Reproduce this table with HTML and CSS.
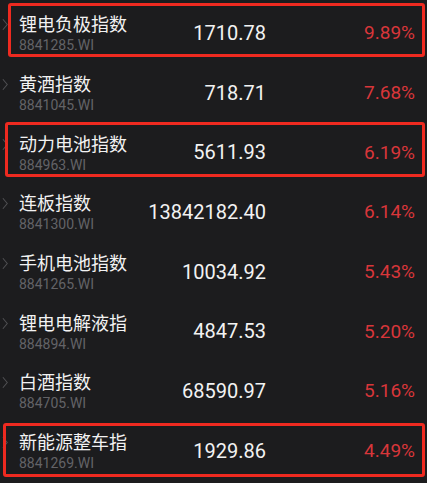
FILE: index.html
```html
<!DOCTYPE html>
<html lang="zh-CN">
  <head>
    <meta charset="UTF-8" />
    <meta name="viewport" content="width=device-width, initial-scale=1.0" />
    <title>指数涨幅</title>
    <link rel="stylesheet" href="styles.css">
  </head>
  <body>
    <ul class="list">
      <li class="row">
        <span class="mark mark-first"></span>
        <svg class="chev" viewBox="0 0 8 14"><polyline points="1,1 6,7 1,13" /></svg>
        <div class="name">
          <div class="title">锂电负极指数</div>
          <div class="code">8841285.WI</div>
        </div>
        <div class="price">1710.78</div>
        <div class="pct">9.89%</div>
      </li>
      <li class="row">
        <svg class="chev" viewBox="0 0 8 14"><polyline points="1,1 6,7 1,13" /></svg>
        <div class="name">
          <div class="title">黄酒指数</div>
          <div class="code">8841045.WI</div>
        </div>
        <div class="price">718.71</div>
        <div class="pct">7.68%</div>
      </li>
      <li class="row">
        <span class="mark mark-mid"></span>
        <svg class="chev" viewBox="0 0 8 14"><polyline points="1,1 6,7 1,13" /></svg>
        <div class="name">
          <div class="title">动力电池指数</div>
          <div class="code">884963.WI</div>
        </div>
        <div class="price">5611.93</div>
        <div class="pct">6.19%</div>
      </li>
      <li class="row">
        <svg class="chev" viewBox="0 0 8 14"><polyline points="1,1 6,7 1,13" /></svg>
        <div class="name">
          <div class="title">连板指数</div>
          <div class="code">8841300.WI</div>
        </div>
        <div class="price">13842182.40</div>
        <div class="pct">6.14%</div>
      </li>
      <li class="row">
        <svg class="chev" viewBox="0 0 8 14"><polyline points="1,1 6,7 1,13" /></svg>
        <div class="name">
          <div class="title">手机电池指数</div>
          <div class="code">8841265.WI</div>
        </div>
        <div class="price">10034.92</div>
        <div class="pct">5.43%</div>
      </li>
      <li class="row">
        <svg class="chev" viewBox="0 0 8 14"><polyline points="1,1 6,7 1,13" /></svg>
        <div class="name">
          <div class="title">锂电电解液指</div>
          <div class="code">884894.WI</div>
        </div>
        <div class="price">4847.53</div>
        <div class="pct">5.20%</div>
      </li>
      <li class="row">
        <svg class="chev" viewBox="0 0 8 14"><polyline points="1,1 6,7 1,13" /></svg>
        <div class="name">
          <div class="title">白酒指数</div>
          <div class="code">884705.WI</div>
        </div>
        <div class="price">68590.97</div>
        <div class="pct">5.16%</div>
      </li>
      <li class="row">
        <span class="mark mark-last"></span>
        <svg class="chev" viewBox="0 0 8 14"><polyline points="1,1 6,7 1,13" /></svg>
        <div class="name">
          <div class="title">新能源整车指</div>
          <div class="code">8841269.WI</div>
        </div>
        <div class="price">1929.86</div>
        <div class="pct">4.49%</div>
      </li>
    </ul>
  </body>
</html>
```

FILE: styles.css
```css
*,
*::before,
*::after {
  box-sizing: border-box;
}
* {
  margin: 0;
  padding: 0;
}
body {
  background-color: #1c1c1e;
  font-family: Roboto, "Noto Sans CJK SC", sans-serif;
  overflow: hidden;
}

.list {
  list-style: none;
  padding-top: 4px;
  padding-right: 12px;
}

.row {
  position: relative;
  display: grid;
  grid-template-columns: 19px 1fr 120px 149px;
  align-items: center;
  height: 59.7px;
}

.chev {
  width: 7px;
  height: 13px;
  margin-left: 2px;
  margin-top: -18px;
  fill: none;
  stroke: #505053;
  stroke-width: 1.2;
}

.name {
  padding-top: 1px;
  padding-bottom: 2px;
}

.title {
  font-family: "Noto Sans CJK SC", sans-serif;
  font-size: 18px;
  line-height: 22px;
  color: #f2f2f2;
}

.code {
  margin-top: 2px;
  font-size: 14px;
  line-height: 18px;
  color: #636367;
}

.price {
  text-align: right;
  font-size: 20px;
  color: #f2f2f2;
  margin-top: -2px;
}

.pct {
  text-align: right;
  font-size: 19px;
  color: #d8363a;
  margin-top: -2px;
}

.mark {
  position: absolute;
  border: 3px solid #ee2a20;
  border-radius: 3px;
}

.mark-first {
  left: 8px;
  right: -10px;
  top: -1px;
  height: 54px;
}

.mark-mid {
  left: 5px;
  right: -10px;
  top: -1.4px;
  height: 55px;
}

.mark-last {
  left: 3px;
  right: -10px;
  top: 1px;
  height: 54px;
}
```
